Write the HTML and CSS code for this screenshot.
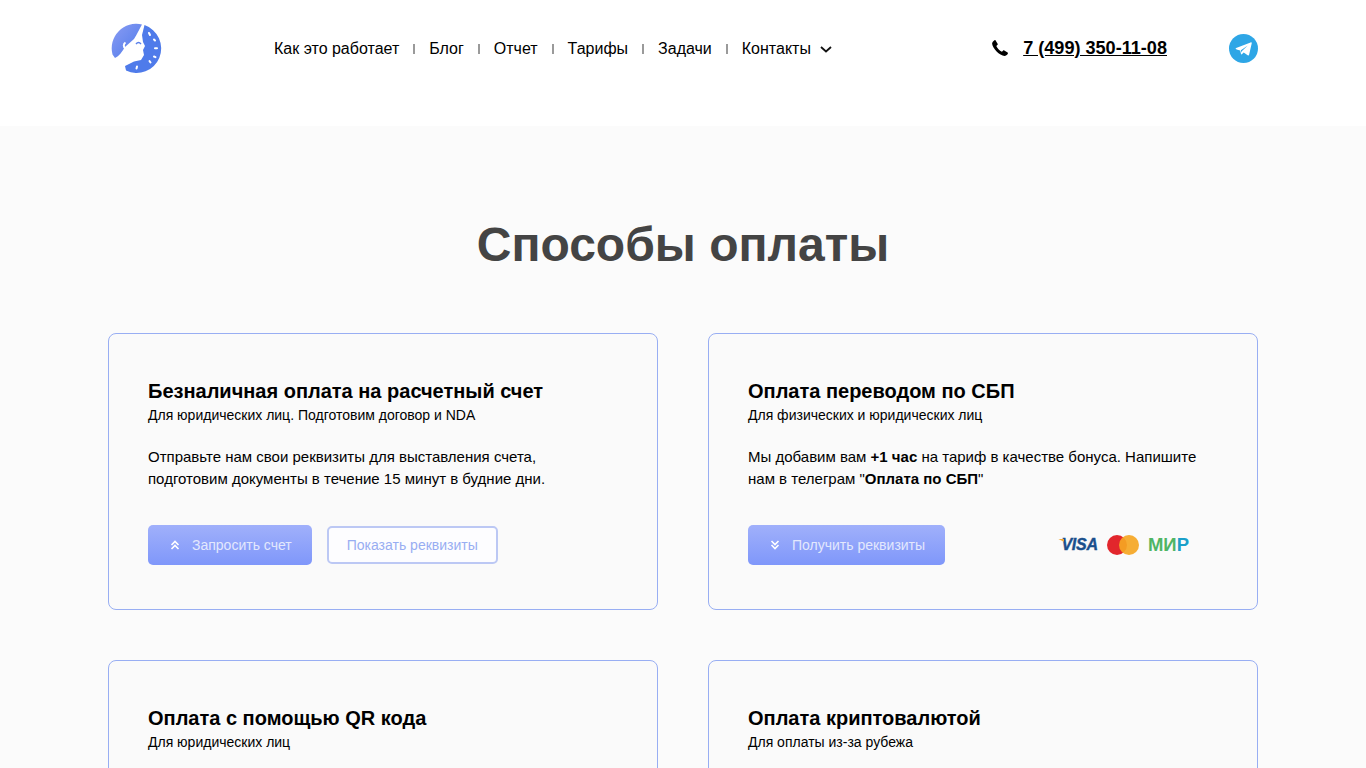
FILE: index.html
```html
<!DOCTYPE html>
<html lang="ru">
<head>
  <meta charset="UTF-8">
  <title>Способы оплаты</title>
  <meta name="viewport" content="width=device-width, initial-scale=1.0">
  <link rel="stylesheet" href="styles.css">
</head>
<body>

<header class="header">
  <a class="logo" href="#">
    <svg width="52" height="52" viewBox="0 0 52 52">
      <defs>
        <linearGradient id="logoGrad" x1="0" y1="0" x2="1" y2="1">
          <stop offset="0" stop-color="#8a9cf3"/>
          <stop offset="1" stop-color="#4d79ea"/>
        </linearGradient>
      </defs>
      <path d="M2.5 32.6 A24.6 24.6 0 0 1 32 2.4 C30 6 27 12 24 17 L15 25 C12 30 9 34 5 36 Z" fill="url(#logoGrad)"/>
      <path d="M34.5 3.1 A24.6 24.6 0 1 1 16 48.6 L15 44 L24 39.5 L31 38 L34 33 L33 28 L35 24 L33 20 L32 13 Z" fill="#4f7bea"/>
      <path d="M15.5 20.5 a3.5 3.5 0 0 0 0 6" fill="none" stroke="#fff" stroke-width="2"/>
      <path d="M26 22 q2.5 -3 5 0" fill="none" stroke="#5a80ea" stroke-width="1.4"/>
      <path d="M39 11 l1 2 M44 17.5 l1 1 M45 26.3 l2 0 M44 34.5 l1.5 .6 M39.5 39 l1 1.5 M27 44.5 l-.5 2" stroke="#fff" stroke-width="2" stroke-linecap="round"/>
    </svg>
  </a>

  <nav class="nav">
    <a href="#">Как это работает</a>
    <span class="sep"></span>
    <a href="#">Блог</a>
    <span class="sep"></span>
    <a href="#">Отчет</a>
    <span class="sep"></span>
    <a href="#">Тарифы</a>
    <span class="sep"></span>
    <a href="#">Задачи</a>
    <span class="sep"></span>
    <a href="#" class="nav-drop">Контакты
      <svg width="12" height="7" viewBox="0 0 12 7"><path d="M1 1 L6 5.5 L11 1" fill="none" stroke="#111" stroke-width="1.8"/></svg>
    </a>
  </nav>

  <a class="phone" href="#">
    <svg width="16" height="16" viewBox="0 0 16 16"><path d="M3.6 0.4 L5.6 3.8 C5.9 4.3 5.7 4.8 5.3 5.1 L4.3 6 C5 8 7.6 10.9 9.9 11.8 L11 10.7 C11.3 10.3 11.8 10.2 12.3 10.5 L15.6 12.6 C16 12.9 16 13.4 15.8 13.8 C15 15.1 13.8 16 12.6 16 C7.5 15.6 0.6 8.4 0.1 3.8 C0 2.4 1.2 1.1 2.5 0.2 C2.9 -0.1 3.4 0 3.6 0.4 Z" fill="#000"/></svg>
    <span>7 (499) 350-11-08</span>
  </a>

  <a class="tg" href="#">
    <svg width="29" height="29" viewBox="0 0 29 29">
      <circle cx="14.5" cy="14.5" r="14.5" fill="#2ea6e6"/>
      <path d="M6.5 14.3 L21.6 8.4 C22.3 8.2 22.9 8.6 22.7 9.6 L20.1 20.7 C19.9 21.5 19.4 21.7 18.7 21.3 L14.7 18.4 L12.8 20.2 C12.5 20.5 12.2 20.6 12 20 L11.2 16.5 L7.6 15.4 C6.8 15.1 6.8 14.5 6.5 14.3 Z M11.9 16.2 L12.4 18.5 L13 16.9 L18.8 11.6 Z" fill="#fff" fill-rule="evenodd"/>
    </svg>
  </a>
</header>

<main class="main">
  <h1 class="page-title">Способы оплаты</h1>

  <div class="cards">

    <!-- безнал -->
    <section class="card">
      <h3 class="card-title">Безналичная оплата на расчетный счет</h3>
      <p class="card-sub">Для юридических лиц. Подготовим договор и NDA</p>
      <p class="card-text">Отправьте нам свои реквизиты для выставления счета,<br>подготовим документы в течение 15 минут в будние дни.</p>
      <div class="card-actions">
        <a class="btn" href="#">
          <svg width="10" height="10" viewBox="0 0 10 10"><path d="M1.5 5 L5 1.5 L8.5 5 M1.5 9 L5 5.5 L8.5 9" fill="none" stroke="#fff" stroke-width="1.6"/></svg>
          Запросить счет
        </a>
        <a class="btn-outline" href="#">Показать реквизиты</a>
      </div>
    </section>

    <!-- сбп -->
    <section class="card">
      <h3 class="card-title">Оплата переводом по СБП</h3>
      <p class="card-sub">Для физических и юридических лиц</p>
      <p class="card-text">Мы добавим вам <b>+1 час</b> на тариф в качестве бонуса. Напишите<br>нам в телеграм "<b>Оплата по СБП</b>"</p>
      <div class="card-actions card-actions-split">
        <a class="btn" href="#">
          <svg width="10" height="10" viewBox="0 0 10 10"><path d="M1.5 1 L5 4.5 L8.5 1 M1.5 5 L5 8.5 L8.5 5" fill="none" stroke="#fff" stroke-width="1.6"/></svg>
          Получить реквизиты
        </a>
        <div class="pay-logos">
          <span class="visa">VISA</span>
          <span class="mc">
            <svg width="32" height="20" viewBox="0 0 32 20">
              <circle cx="10" cy="10" r="10" fill="#e2262c"/>
              <circle cx="22" cy="10" r="10" fill="#f5a623" fill-opacity="0.92"/>
            </svg>
          </span>
          <span class="mir">МИ<i>Р</i></span>
        </div>
      </div>
    </section>

    <!-- qr -->
    <section class="card">
      <h3 class="card-title">Оплата с помощью QR кода</h3>
      <p class="card-sub">Для юридических лиц</p>
    </section>

    <!-- крипта -->
    <section class="card">
      <h3 class="card-title">Оплата криптовалютой</h3>
      <p class="card-sub">Для оплаты из-за рубежа</p>
    </section>

  </div>
</main>

</body>
</html>
```

FILE: styles.css
```css
* {
  box-sizing: border-box;
}

body {
  font-family: "Liberation Sans", Arial, sans-serif;
  background: #fbfbfb;
  color: #000;
  margin: 0;
}

a {
  color: inherit;
  text-decoration: none;
}

.header {
  display: flex;
  align-items: center;
  height: 126px;
  padding: 0 108px 30px;
  background: #fff;
}

.logo {
  display: flex;
  width: 166px;
  padding-left: 2px;
}

.nav {
  display: flex;
  align-items: center;
  gap: 14px;
  margin-top: 2px;
  font-size: 16px;
  color: #000;
}

.sep {
  width: 2px;
  height: 10px;
  background: #9a9a9a;
}

.nav-drop {
  display: flex;
  align-items: center;
  gap: 9px;
}

.phone {
  display: flex;
  align-items: center;
  gap: 15px;
  margin-left: auto;
  font-size: 18.1px;
  font-weight: bold;
  color: #000;
}

.phone span {
  text-decoration: underline;
}

.tg {
  display: flex;
  margin-left: 62px;
}

.main {
  padding: 0 108px 60px;
}

.page-title {
  margin: 0;
  padding: 91px 0 60px;
  text-align: center;
  font-size: 48px;
  line-height: 56px;
  font-weight: bold;
  color: #444;
}

.cards {
  display: grid;
  grid-template-columns: 550px 550px;
  gap: 50px;
}

.card {
  height: 277px;
  padding: 46px 39px 0;
  background: #fafafa;
  border: 1px solid #98aef3;
  border-radius: 8px;
}

.card-title {
  margin: 0;
  font-size: 20px;
  line-height: 23px;
  font-weight: bold;
}

.card-sub {
  margin: 2px 0 0;
  font-size: 14px;
  line-height: 20px;
  color: #000;
}

.card-text {
  margin: 21px 0 0;
  font-size: 15px;
  line-height: 22px;
  color: #000;
}

.card-actions {
  display: flex;
  align-items: center;
  gap: 15px;
  margin-top: 35px;
}

.card-actions-split {
  justify-content: space-between;
  padding-right: 29px;
}

.btn {
  display: flex;
  align-items: center;
  gap: 12px;
  height: 40px;
  padding: 0 20px 0 22px;
  font-size: 14px;
  color: #e3e8fd;
  background: linear-gradient(180deg, #a0b0fb, #7f97fa);
  border-radius: 5px;
}

.btn-outline {
  display: flex;
  align-items: center;
  height: 38px;
  padding: 0 18px;
  font-size: 14px;
  color: #98adf2;
  background: #fdfdff;
  border: 2px solid #bcc8f4;
  border-radius: 5px;
}

.pay-logos {
  display: flex;
  align-items: center;
  gap: 9px;
}

.visa {
  position: relative;
  font-size: 16px;
  font-weight: bold;
  font-style: italic;
  letter-spacing: -0.2px;
  color: #1a4f8c;
  -webkit-text-stroke: 0.4px #1a4f8c;
}

.visa::before {
  content: "";
  position: absolute;
  left: -3px;
  top: 3px;
  width: 6px;
  height: 3px;
  background: #f0a93a;
  clip-path: polygon(0 0, 100% 0, 100% 100%);
}

.mc {
  display: flex;
}

.mir {
  font-size: 18.5px;
  line-height: 20px;
  font-weight: bold;
  color: #4fb564;
}

.mir i {
  font-style: normal;
  color: #1a9fc9;
}
```
